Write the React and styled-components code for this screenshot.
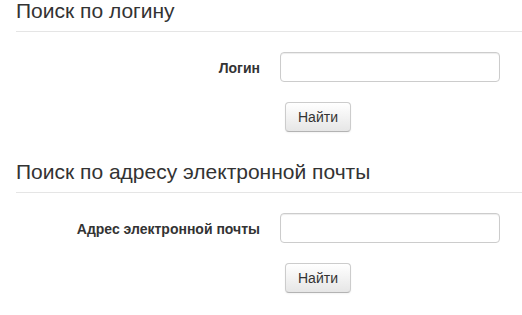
import React from "react";
import styled, { createGlobalStyle } from "styled-components";

const GlobalStyle = createGlobalStyle`
  body {
    margin: 0;
    background: #fff;
    font-family: "Liberation Sans", Arial, Helvetica, sans-serif;
    color: #333;
  }
`;

const Page = styled.div`
  padding-left: 16px;
  width: 506px;
`;

const Section = styled.section`
  margin-bottom: 29px;
`;

const Legend = styled.h2`
  margin: 0 0 20px;
  padding-bottom: 9px;
  font-size: 21px;
  line-height: 22px;
  font-weight: normal;
  color: #333;
  border-bottom: 1px solid #e5e5e5;
`;

const ControlGroup = styled.div`
  display: flex;
  align-items: center;
  margin-bottom: 20px;
`;

const Label = styled.label`
  width: 244px;
  padding-top: 1px;
  text-align: right;
  font-size: 14px;
  font-weight: bold;
  color: #333;
`;

const Input = styled.input`
  box-sizing: border-box;
  margin-left: 20px;
  width: 220px;
  height: 30px;
  padding: 4px 6px;
  font-size: 14px;
  border: 1px solid #ccc;
  border-radius: 4px;
  box-shadow: inset 0 1px 1px rgba(0, 0, 0, 0.075);
  outline: none;
`;

const Actions = styled.div`
  padding-left: 269px;
`;

const Button = styled.button`
  box-sizing: border-box;
  height: 30px;
  padding: 4px 12px;
  font-family: inherit;
  font-size: 14px;
  line-height: 20px;
  color: #333;
  background: linear-gradient(to bottom, #ffffff, #e6e6e6);
  border: 1px solid #ccc;
  border-bottom-color: #b3b3b3;
  border-radius: 4px;
  box-shadow: inset 0 1px 0 rgba(255, 255, 255, 0.2), 0 1px 2px rgba(0, 0, 0, 0.05);
  cursor: pointer;
`;

const SearchSection = ({ title, label }) => (
  <Section>
    <Legend>{title}</Legend>
    <ControlGroup>
      <Label>{label}</Label>
      <Input type="text" />
    </ControlGroup>
    <Actions>
      <Button type="submit">Найти</Button>
    </Actions>
  </Section>
);

export default function App() {
  return (
    <Page>
      <GlobalStyle />
      <SearchSection title="Поиск по логину" label="Логин" />
      <SearchSection
        title="Поиск по адресу электронной почты"
        label="Адрес электронной почты"
      />
    </Page>
  );
}
